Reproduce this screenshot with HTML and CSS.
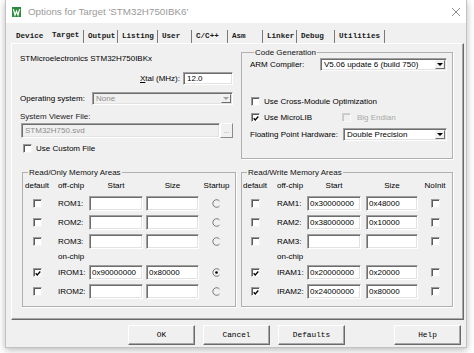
FILE: index.html
```html
<!DOCTYPE html>
<html>
<head>
<meta charset="utf-8">
<title>Options for Target</title>
<link rel="stylesheet" href="styles.css">
</head>
<body>
<div class="window">
  <div class="titlebar">
    <svg class="appicon" width="9" height="10" viewBox="0 0 9 10"><rect width="9" height="10" fill="#2e8b3e"/><path d="M1.4 2.2 L3 8 L4.5 4.2 L6 8 L7.6 2.2" stroke="#fff" stroke-width="1.2" fill="none"/></svg>
    <span class="title">Options for Target 'STM32H750IBK6'</span>
    <svg class="close" width="10" height="10" viewBox="0 0 10 10"><path d="M1 1 L9 9 M9 1 L1 9" stroke="#8a8a8a" stroke-width="1"/></svg>
  </div>
  <div class="client">
    <div class="tabs">
      <div class="tab t-device nosep">Device</div>
      <div class="tab t-target active">Target</div>
      <div class="tab t-output">Output</div>
      <div class="tab t-listing">Listing</div>
      <div class="tab t-user">User</div>
      <div class="tab t-cpp">C/C++</div>
      <div class="tab t-asm">Asm</div>
      <div class="tab t-linker">Linker</div>
      <div class="tab t-debug">Debug</div>
      <div class="tab t-util">Utilities</div>
    </div>
    <div class="page">
      <div class="top">
        <div class="dev">
          <div class="devname">STMicroelectronics STM32H750IBKx</div>
          <div class="xtal"><span class="lbl"><u>X</u>tal (MHz):</span><div class="edit xtal-edit">12.0</div></div>
          <div class="os"><span class="lbl">Operating system:</span><div class="combo disabled os-combo"><span class="val">None</span><span class="drop"><i></i></span></div></div>
          <div class="svflabel">System Viewer File:</div>
          <div class="svf"><div class="edit disabled svf-edit">STM32H750.svd</div><div class="dots">...</div></div>
          <div class="chkrow custom"><span class="cb"></span><span>Use Custom File</span></div>
        </div>
        <fieldset class="group codegen">
          <legend>Code Generation</legend>
          <div class="arm"><span class="lbl arm-lbl">ARM Compiler:</span><div class="combo arm-combo"><span class="val">V5.06 update 6 (build 750)</span><span class="drop"><i></i></span></div></div>
          <div class="chkrow cmo"><span class="cb"></span><span>Use Cross-Module Optimization</span></div>
          <div class="chkrow mlib"><div class="mlib-a"><span class="cb checked"><svg width="7" height="7" viewBox="0 0 7 7"><path d="M0.8 3.2 L2.6 5.2 L6.2 1.2" stroke="#000" stroke-width="1.5" fill="none"/></svg></span><span>Use MicroLIB</span></div><div class="mlib-b dis"><span class="cb disabled"></span><span>Big Endian</span></div></div>
          <div class="fph"><span class="lbl fph-lbl">Floating Point Hardware:</span><div class="combo fph-combo"><span class="val">Double Precision</span><span class="drop"><i></i></span></div></div>
        </fieldset>
      </div>
      <div class="mem">
        <fieldset class="group ro">
          <legend>Read/Only Memory Areas</legend>
          <div class="mgrid ro-grid">
            <span class="h c1">default</span><span class="h c2">off-chip</span><span class="h c3">Start</span><span class="h c4">Size</span><span class="h c5">Startup</span>

            <span class="c1"><span class="cb"></span></span><span class="c2">ROM1:</span><span class="c3"><span class="edit m-edit"></span></span><span class="c4"><span class="edit m-edit"></span></span><span class="c5"><svg class="radio" width="9" height="9" viewBox="0 0 9 9"><path d="M7.5 2 A3.8 3.8 0 1 0 7.5 7" stroke="#777" stroke-width="1" fill="none"/></svg></span>

            <span class="c1"><span class="cb"></span></span><span class="c2">ROM2:</span><span class="c3"><span class="edit m-edit"></span></span><span class="c4"><span class="edit m-edit"></span></span><span class="c5"><svg class="radio" width="9" height="9" viewBox="0 0 9 9"><path d="M7.5 2 A3.8 3.8 0 1 0 7.5 7" stroke="#777" stroke-width="1" fill="none"/></svg></span>

            <span class="c1"><span class="cb"></span></span><span class="c2">ROM3:</span><span class="c3"><span class="edit m-edit"></span></span><span class="c4"><span class="edit m-edit"></span></span><span class="c5"><svg class="radio" width="9" height="9" viewBox="0 0 9 9"><path d="M7.5 2 A3.8 3.8 0 1 0 7.5 7" stroke="#777" stroke-width="1" fill="none"/></svg></span>

            <span class="c1"></span><span class="c2 onchip">on-chip</span><span class="c3"></span><span class="c4"></span><span class="c5"></span>

            <span class="c1"><span class="cb checked"><svg width="7" height="7" viewBox="0 0 7 7"><path d="M0.8 3.2 L2.6 5.2 L6.2 1.2" stroke="#000" stroke-width="1.5" fill="none"/></svg></span></span><span class="c2">IROM1:</span><span class="c3"><span class="edit m-edit">0x90000000</span></span><span class="c4"><span class="edit m-edit">0x80000</span></span><span class="c5"><svg class="radio" width="9" height="9" viewBox="0 0 9 9"><path d="M7.5 2 A3.8 3.8 0 1 0 7.5 7" stroke="#777" stroke-width="1" fill="none"/><circle cx="4.5" cy="4.5" r="1.3" fill="#000"/></svg></span>

            <span class="c1"><span class="cb"></span></span><span class="c2">IROM2:</span><span class="c3"><span class="edit m-edit"></span></span><span class="c4"><span class="edit m-edit"></span></span><span class="c5"><svg class="radio" width="9" height="9" viewBox="0 0 9 9"><path d="M7.5 2 A3.8 3.8 0 1 0 7.5 7" stroke="#777" stroke-width="1" fill="none"/></svg></span>
          </div>
        </fieldset>
        <fieldset class="group rw">
          <legend>Read/Write Memory Areas</legend>
          <div class="mgrid rw-grid">
            <span class="h c1">default</span><span class="h c2">off-chip</span><span class="h c3">Start</span><span class="h c4">Size</span><span class="h c5">NoInit</span>

            <span class="c1"><span class="cb"></span></span><span class="c2">RAM1:</span><span class="c3"><span class="edit m-edit">0x30000000</span></span><span class="c4"><span class="edit m-edit">0x48000</span></span><span class="c5"><span class="cb"></span></span>

            <span class="c1"><span class="cb"></span></span><span class="c2">RAM2:</span><span class="c3"><span class="edit m-edit">0x38000000</span></span><span class="c4"><span class="edit m-edit">0x10000</span></span><span class="c5"><span class="cb"></span></span>

            <span class="c1"><span class="cb"></span></span><span class="c2">RAM3:</span><span class="c3"><span class="edit m-edit"></span></span><span class="c4"><span class="edit m-edit"></span></span><span class="c5"><span class="cb"></span></span>

            <span class="c1"></span><span class="c2 onchip">on-chip</span><span class="c3"></span><span class="c4"></span><span class="c5"></span>

            <span class="c1"><span class="cb checked"><svg width="7" height="7" viewBox="0 0 7 7"><path d="M0.8 3.2 L2.6 5.2 L6.2 1.2" stroke="#000" stroke-width="1.5" fill="none"/></svg></span></span><span class="c2">IRAM1:</span><span class="c3"><span class="edit m-edit">0x20000000</span></span><span class="c4"><span class="edit m-edit">0x20000</span></span><span class="c5"><span class="cb"></span></span>

            <span class="c1"><span class="cb checked"><svg width="7" height="7" viewBox="0 0 7 7"><path d="M0.8 3.2 L2.6 5.2 L6.2 1.2" stroke="#000" stroke-width="1.5" fill="none"/></svg></span></span><span class="c2">IRAM2:</span><span class="c3"><span class="edit m-edit">0x24000000</span></span><span class="c4"><span class="edit m-edit">0x80000</span></span><span class="c5"><span class="cb"></span></span>
          </div>
        </fieldset>
      </div>
    </div>
    <div class="buttons">
      <div class="button b-ok">OK</div>
      <div class="button b-cancel">Cancel</div>
      <div class="button b-defaults">Defaults</div>
      <div class="button b-help">Help</div>
    </div>
  </div>
</div>
</body>
</html>
```

FILE: styles.css
```css
* { box-sizing: border-box; }
html, body { margin: 0; padding: 0; }
body {
  width: 474px;
  height: 353px;
  overflow: hidden;
  background: #ffffff;
  font-family: "Liberation Sans", Arial, sans-serif;
  font-size: 8px;
  color: #000;
}
.window {
  margin-left: 5px;
  width: 462px;
  height: 348px;
  background: #f0f0f0;
  border: 1px solid #c2c2c2;
  border-top: none;
  box-shadow: 0 2px 7px rgba(0, 0, 0, 0.28);
}
.titlebar {
  height: 23px;
  background: #fff;
  display: flex;
  align-items: center;
  padding-left: 6px;
  padding-right: 5px;
}
.appicon { display: block; margin-top: 1px; }
.title {
  margin-left: 7px;
  font-size: 9.8px;
  color: #9a9a9a;
  flex: 1;
}
.close { display: block; }

.client { padding: 0 1px 0 5px; }

/* tabs */
.tabs {
  display: flex;
  height: 20px;
  padding-top: 7px;
  padding-left: 1px;
}
.tab {
  height: 13px;
  line-height: 12px;
  padding-left: 4px;
  font-family: "Liberation Mono", "Courier New", monospace;
  font-weight: bold;
  font-size: 7.6px;
  border-right: 1px solid #7a7a7a;
  color: #1a1a1a;
}
.tab.nosep { border-right-color: transparent; }
.tab.active { line-height: 10px; }
.t-device { width: 36px; }
.t-target { width: 36px; }
.t-output { width: 34px; }
.t-listing { width: 40px; }
.t-user { width: 34px; }
.t-cpp { width: 36px; }
.t-asm { width: 35px; }
.t-linker { width: 34px; }
.t-debug { width: 38px; }
.t-util { width: 50px; }

/* tab page */
.page {
  width: 453px;
  height: 277px;
  border-top: 1px solid #fff;
  border-left: 1px solid #fff;
  border-right: 1px solid #6a6a6a;
  border-bottom: 1px solid #6a6a6a;
  box-shadow: inset -1px -1px 0 #a8a8a8;
  padding: 4px 10px 0 8px;
}
.top {
  display: flex;
  align-items: flex-start;
  gap: 7px;
}
.dev {
  width: 214px;
  margin-top: 4px;
}
.devname { height: 13px; line-height: 13px; }
.xtal {
  margin-top: 7px;
  height: 13px;
  display: flex;
  justify-content: flex-end;
  align-items: center;
  gap: 3px;
  padding-right: 1px;
}
.lbl { white-space: nowrap; }
.xtal-edit { width: 50px; height: 13px; line-height: 11px; }
.os {
  margin-top: 7px;
  height: 13px;
  display: flex;
  align-items: center;
  justify-content: space-between;
  padding-right: 1px;
}
.os-combo { width: 141px; }
.svflabel { margin-top: 6px; height: 11px; line-height: 11px; color: #222; }
.svf { margin-top: 1px; height: 15px; display: flex; padding-left: 1px; padding-right: 1px; }
.svf-edit { width: 200px; height: 15px; line-height: 13px; }
.dots {
  width: 13px;
  height: 15px;
  line-height: 14px;
  text-align: center;
  color: #999;
  font-size: 7px;
  border: 1px solid;
  border-color: #fff #8a8a8a #8a8a8a #fff;
  background: #f0f0f0;
}
.chkrow {
  display: flex;
  align-items: center;
  height: 11px;
  gap: 4px;
}
.custom { margin-top: 5px; padding-left: 3px; }

/* edits */
.edit {
  display: block;
  background: #fff;
  border: 1px solid;
  border-color: #a0a0a0 #fff #fff #a0a0a0;
  box-shadow: inset 1px 1px 0 #6e6e6e, inset -1px -1px 0 #e2e2e2;
  padding-left: 3px;
  white-space: nowrap;
  overflow: hidden;
}
.edit.disabled { background: #f0f0f0; color: #8c8c8c; }

/* combo */
.combo {
  height: 13px;
  display: flex;
  align-items: stretch;
  background: #fff;
  border: 1px solid;
  border-color: #a0a0a0 #fff #fff #a0a0a0;
  box-shadow: inset 1px 1px 0 #6e6e6e, inset -1px -1px 0 #e2e2e2;
  padding: 1px;
}
.combo .val { flex: 1; padding-left: 2px; line-height: 10px; white-space: nowrap; }
.combo .drop {
  width: 10px;
  background: #f0f0f0;
  border: 1px solid;
  border-color: #f6f6f6 #6e6e6e #6e6e6e #f6f6f6;
  display: flex;
  align-items: center;
  justify-content: center;
}
.combo .drop i {
  width: 0; height: 0;
  border-left: 3px solid transparent;
  border-right: 3px solid transparent;
  border-top: 3px solid #000;
}
.combo.disabled { background: #f0f0f0; color: #8c8c8c; }
.combo.disabled .drop i { border-top-color: #a0a0a0; }

/* group boxes */
.group {
  margin: 0;
  border: 1px solid #b0b0b0;
  box-shadow: 1px 1px 0 #fff;
  min-width: 0;
}
.group legend {
  padding: 0 1px;
  margin-left: 4px;
  font-size: 8px;
  line-height: 9px;
  color: #111;
}
.codegen {
  width: 212px;
  padding: 1px 4px 17px 8px;
}
.arm { display: flex; align-items: center; height: 13px; }
.arm-lbl { width: 70px; }
.arm-combo { width: 127px; }
.cmo { margin-top: 25px; padding-left: 1px; }
.mlib { margin-top: 5px; padding-left: 1px; gap: 0; }
.mlib-a { display: flex; align-items: center; gap: 4px; width: 91px; }
.mlib-b { display: flex; align-items: center; gap: 6px; color: #a8a8a8; }
.fph { margin-top: 5px; display: flex; align-items: center; height: 13px; }
.fph-lbl { width: 93px; }
.fph-combo { width: 104px; }

/* checkbox */
.cb {
  display: inline-flex;
  align-items: center;
  justify-content: center;
  width: 9px;
  height: 9px;
  background: #fff;
  border: 1px solid;
  border-color: #9a9a9a #f4f4f4 #f4f4f4 #9a9a9a;
  box-shadow: inset 1px 1px 0 #5a5a5a;
  flex: none;
}
.cb svg { display: block; margin: 1px 0 0 1px; }
.cb.disabled { background: #f0f0f0; box-shadow: inset 1px 1px 0 #c8c8c8; border-color: #d0d0d0 #fafafa #fafafa #d0d0d0; }

/* memory areas */
.mem {
  display: flex;
  gap: 5px;
  margin-top: 9px;
}
.ro { width: 214px; margin-left: 2px; padding: 2px 0 7px 1px; }
.rw { width: 212px; padding: 2px 0 7px 1px; }
.mgrid {
  display: grid;
  grid-template-rows: 13px 15px 15px 15px 8px 15px 15px;
  row-gap: 4px;
  align-items: center;
}
.ro-grid { grid-template-columns: 26px 39px 57px 53px 35px; }
.rw-grid { grid-template-columns: 24px 40px 59px 52px 34px; }
.mgrid > span { display: flex; align-items: center; white-space: nowrap; height: 100%; }
.mgrid .c1 { justify-content: center; }
.mgrid .c2 { padding-left: 8px; }
.rw-grid .c2 { padding-left: 10px; }
.mgrid .c5 { justify-content: center; }
.mgrid .h.c3 { justify-content: center; width: 54px; }
.mgrid .h.c4 { justify-content: center; width: 53px; }
.rw-grid .h.c4 { width: 52px; }
.m-edit { width: 54px; height: 15px; line-height: 13px; padding-left: 2px; }
.ro-grid .c4 .m-edit { width: 53px; }
.rw-grid .c4 .m-edit { width: 52px; }
.radio { display: block; }
.onchip { line-height: 8px; }

/* buttons */
.buttons {
  display: flex;
  margin-top: 5px;
  padding-left: 117px;
}
.button {
  height: 20px;
  width: 67px;
  line-height: 18px;
  text-align: center;
  font-family: "Liberation Mono", "Courier New", monospace;
  font-weight: normal;
  font-size: 7.8px;
  color: #000;
  border: 1px solid;
  border-color: #fff #6a6a6a #6a6a6a #fff;
  box-shadow: inset -1px -1px 0 #a8a8a8;
  background: #f0f0f0;
}
.b-cancel { margin-left: 8px; }
.b-defaults { margin-left: 8px; }
.b-help { margin-left: 49px; }
```
